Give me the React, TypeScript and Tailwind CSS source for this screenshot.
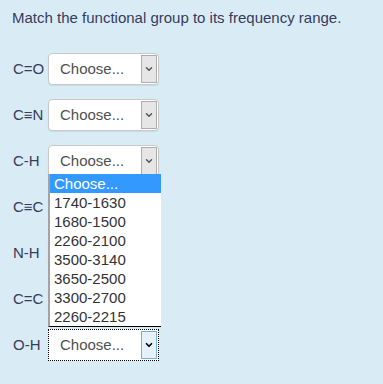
import { ChevronDown } from 'lucide-react'

const rows = ['C=O', 'C≡N', 'C-H', 'C≡C', 'N-H', 'C=C', 'O-H']

const options = ['Choose...', '1740-1630', '1680-1500', '2260-2100', '3500-3140', '3650-2500', '3300-2700', '2260-2215']

function Select({ focused }: { focused?: boolean }) {
  return (
    <div
      className={
        focused
          ? 'flex h-[32px] w-[111px] items-stretch border border-dotted border-black bg-white'
          : 'flex h-[32px] w-[111px] items-stretch rounded-[4px] border border-[#c9c9c9] bg-white shadow-[0_1px_1px_rgba(0,0,0,0.08)]'
      }
    >
      <span className="flex flex-1 items-center pl-[11px] text-[15px] text-[#505050]">Choose...</span>
      <span
        className={
          focused
            ? 'm-[1px] flex w-[16px] items-center justify-center border border-[#7aaee0] bg-[#e5f1fb]'
            : 'm-[1px] flex w-[16px] items-center justify-center border border-[#adadad] bg-[#e6e6e6]'
        }
      >
        <ChevronDown
          size={10}
          strokeWidth={focused ? 4 : 3.5}
          className={focused ? 'text-black' : 'text-[#555]'}
        />
      </span>
    </div>
  )
}

export default function App() {
  return (
    <div
      className="relative h-[384px] w-[383px] bg-[#d9ecf5] px-3 pt-[9px] text-[#373b5c]"
      style={{ fontFamily: '"Liberation Sans", Arial, sans-serif' }}
    >
      <p className="text-[15px] leading-[18px]">Match the functional group to its frequency range.</p>

      <div className="mt-[26px] flex flex-col gap-[14px]">
        {rows.map((r, i) => (
          <div key={r} className="flex items-center">
            <span className="w-[36px] pl-[1px] text-[15px]">{r}</span>
            <Select focused={i === rows.length - 1} />
          </div>
        ))}
      </div>

      {/* open dropdown of the C-H select */}
      <ul className="absolute left-[48px] top-[174px] w-[113px] border-b border-l-2 border-b-black border-l-[#a3a3a3] bg-white">
        {options.map((o, i) => (
          <li
            key={o}
            className={
              i === 0
                ? 'h-[19px] bg-[#3399ff] pl-[4px] text-[15px] leading-[19px] text-white'
                : 'h-[19px] pl-[4px] text-[15px] leading-[19px] text-[#333]'
            }
          >
            {o}
          </li>
        ))}
      </ul>
    </div>
  )
}
